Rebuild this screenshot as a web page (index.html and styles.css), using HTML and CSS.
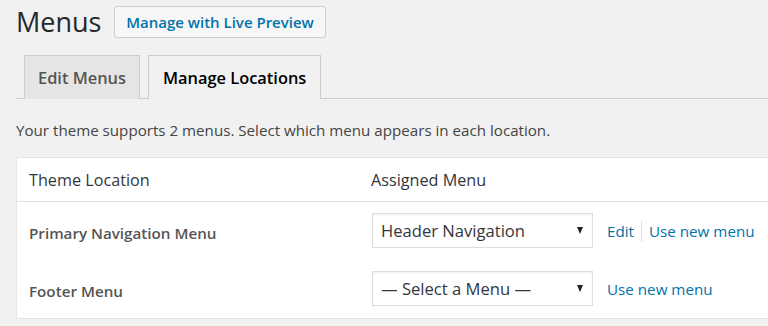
FILE: index.html
```html
<!DOCTYPE html>
<html>
<head>
<meta charset="utf-8">
<link rel="stylesheet" href="styles.css">
</head>
<body>
<div class="wrap">
  <div class="title-row">
    <h1 class="title">Menus</h1>
    <a class="btn-preview">Manage with Live Preview</a>
  </div>
  <div class="tabs">
    <a class="tab">Edit Menus</a>
    <a class="tab tab-active">Manage Locations</a>
  </div>
  <p class="intro">Your theme supports 2 menus. Select which menu appears in each location.</p>
  <div class="table">
    <div class="row head">
      <div class="col-loc">Theme Location</div>
      <div class="col-menu">Assigned Menu</div>
    </div>
    <div class="row">
      <div class="col-loc label">Primary Navigation Menu</div>
      <div class="col-menu menu-cell">
        <div class="select"><span>Header Navigation</span><span class="arrow"></span></div>
        <a class="link">Edit</a><span class="sep"></span><a class="link">Use new menu</a>
      </div>
    </div>
    <div class="row">
      <div class="col-loc label">Footer Menu</div>
      <div class="col-menu menu-cell">
        <div class="select"><span>— Select a Menu —</span><span class="arrow"></span></div>
        <a class="link">Use new menu</a>
      </div>
    </div>
  </div>
</div>
</body>
</html>
```
FILE: styles.css
```css
html, body {
  margin: 0;
  padding: 0;
  background: #f1f1f1;
  overflow: hidden;
}
body {
  font-family: "Open Sans", "Noto Sans", sans-serif;
  color: #444;
  font-size: 15px;
}
.wrap {
  padding-left: 16px;
  width: 800px;
}
.title-row {
  display: flex;
  align-items: flex-start;
  padding-top: 6px;
  height: 55px;
  box-sizing: border-box;
}
.title {
  margin: 0;
  font-size: 27px;
  font-weight: 400;
  color: #23282d;
  line-height: 32px;
  width: 98px;
}
.btn-preview {
  display: block;
  box-sizing: border-box;
  height: 32px;
  width: 212px;
  border: 1px solid #ccc;
  border-radius: 3px;
  background: #f7f7f7;
  color: #0073aa;
  font-weight: 600;
  font-size: 15px;
  line-height: 30px;
  text-align: center;
}
.tabs {
  display: flex;
  padding-left: 8px;
  border-bottom: 1px solid #ccc;
  height: 43px;
}
.tab {
  box-sizing: border-box;
  height: 44px;
  border: 1px solid #ccc;
  border-bottom: none;
  background: #e5e5e5;
  color: #555;
  font-weight: 600;
  font-size: 16.4px;
  line-height: 44px;
  padding: 0 0 0 13px;
  width: 116px;
}
.tab-active {
  margin-left: 8px;
  background: #f1f1f1;
  color: #000;
  width: 173px;
  height: 44px;
  padding-left: 14px;
  position: relative;
  z-index: 1;
  box-shadow: 0 1px 0 #f1f1f1;
}
.intro {
  margin: 0;
  padding-top: 20px;
  line-height: 22px;
  height: 58px;
  box-sizing: border-box;
  color: #444;
  font-size: 15.15px;
}
.table {
  background: #fff;
  border: 1px solid #e5e5e5;
  box-shadow: 0 1px 1px rgba(0,0,0,0.04);
  width: 790px;
}
.row {
  display: flex;
  align-items: center;
  height: 58px;
}
.head {
  height: 43px;
  border-bottom: 1px solid #e1e1e1;
  font-size: 16.2px;
  color: #32373c;
}
.col-loc {
  box-sizing: border-box;
  width: 354px;
  padding-left: 12px;
}
.col-menu {
  flex: 1;
}
.label {
  font-weight: 600;
  font-size: 15.2px;
  color: #555;
  padding-top: 4px;
}
.menu-cell {
  display: flex;
  align-items: center;
  padding-left: 1px;
}
.select {
  box-sizing: border-box;
  width: 221px;
  height: 35px;
  margin-top: -2px;
  border: 1px solid #ddd;
  box-shadow: inset 0 1px 2px rgba(0,0,0,0.07);
  background: #fff;
  display: flex;
  align-items: center;
  justify-content: space-between;
  padding: 0 9px 0 8px;
  font-size: 16.6px;
  color: #32373c;
  margin-right: 14px;
}
.arrow {
  width: 0;
  height: 0;
  border-left: 3.5px solid transparent;
  border-right: 3.5px solid transparent;
  border-top: 7px solid #222;
}
.link {
  color: #0073aa;
  font-size: 15.2px;
}
.sep {
  display: inline-block;
  width: 1px;
  height: 21px;
  background: #ddd;
  margin: 0 7px 0 7px;
}
```
